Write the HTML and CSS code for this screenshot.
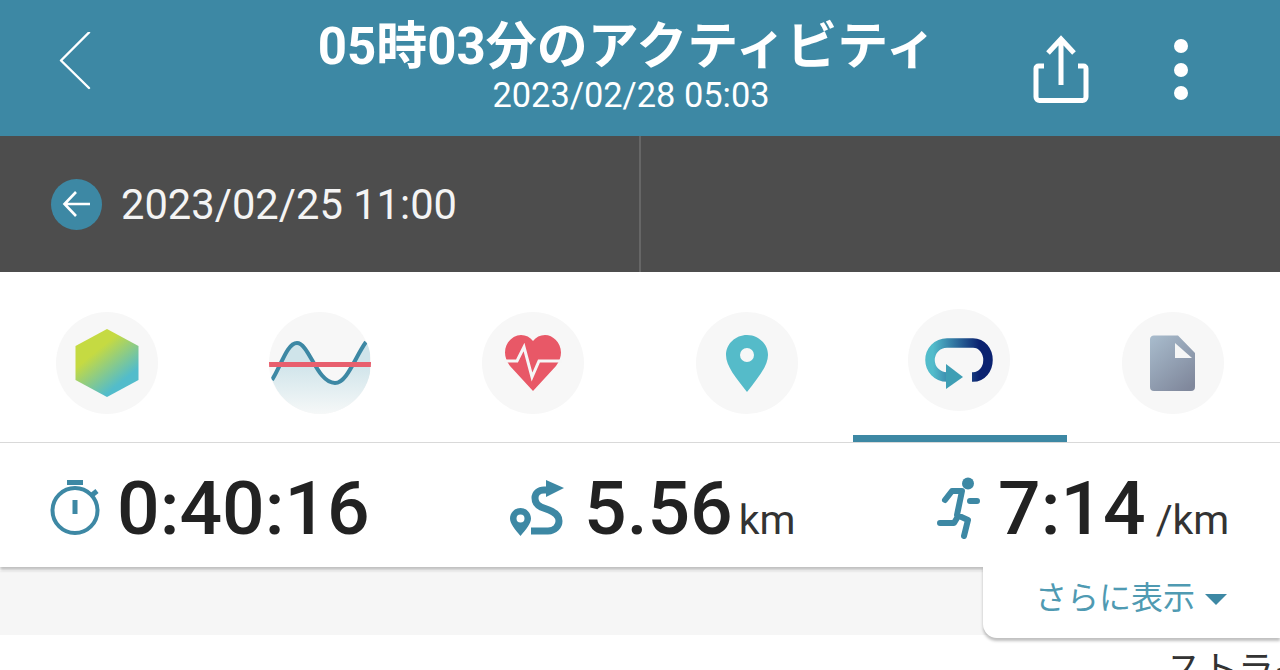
FILE: index.html
```html
<!DOCTYPE html>
<html lang="ja">
<head>
<meta charset="utf-8">
<title>05時03分のアクティビティ</title>
<link rel="stylesheet" href="styles.css">
</head>
<body>
<header class="top">
  <svg class="back" width="32" height="58" viewBox="0 0 32 58"><path d="M30 1.500 2 29.500 30 57" transform="translate(0 -1)" fill="none" stroke="#fff" stroke-width="2.400" stroke-linecap="round" stroke-linejoin="round" /></svg>
  <div class="heading">
    <div class="title">05時03分のアクティビティ</div>
    <div class="subtitle">2023/02/28 05:03</div>
  </div>
  <svg class="share" width="56" height="70" viewBox="0 0 56 70"><path d="M11 33H5.500a2.500 2.500 0 0 0-2.500 2.500V64a3.500 3.500 0 0 0 3.500 3.500h43A3.500 3.500 0 0 0 53 64V35.500A2.500 2.500 0 0 0 50.500 33H45M28 52V6M15 20 28 6l13 14" fill="none" stroke="#fff" stroke-width="5" /></svg>
  <div class="dots"><i></i><i></i><i></i></div>
</header>
<nav class="pager">
  <div class="pager-cell">
    <span class="prev"><svg width="32" height="32" viewBox="0 0 32 32"><path d="M29 16H4M15 4 3.500 16 15 28" fill="none" stroke="#fff" stroke-width="2.600" /></svg></span>
    <span class="prev-date">2023/02/25 11:00</span>
  </div>
  <div class="pager-cell"></div>
</nav>
<section class="tabs">
  <div class="tab"><span class="disc">
    <svg width="64" height="70" viewBox="0 0 64 70"><defs><linearGradient id="g1" x1="0.250" y1="0.200" x2="0.700" y2="0.800"><stop offset="0.200" stop-color="#c5da42"/><stop offset="1" stop-color="#52bccb"/></linearGradient></defs><path d="M32 1 63.500 18v34L32 69 .5 52V18z" fill="url(#g1)"/></svg>
  </span></div>
  <div class="tab"><span class="disc">
    <svg width="102" height="102" viewBox="0 0 102 102"><defs><linearGradient id="g2" x1="0" y1="0" x2="0" y2="1"><stop offset="0.300" stop-color="#cfe4ea"/><stop offset="1" stop-color="#f6f8f8"/></linearGradient></defs><path d="M3 68C12 54 18 31 28 31c12 0 20 40 38 40 12 0 22-28 35-42v34A51 51 0 0 1 8 78z" fill="url(#g2)"/><path d="M3 68C12 54 18 31 28 31c12 0 20 40 38 40 12 0 20-26 31-41" fill="none" stroke="#3d88a4" stroke-width="4"/><rect x="0" y="50" width="102" height="5" fill="#e85f6e"/></svg>
  </span></div>
  <div class="tab"><span class="disc">
    <svg width="58" height="58" viewBox="0 0 58 58"><path d="M29 57 6 32C-6 16 6 1 17 1c5 0 9 2 12 6 3-4 7-6 12-6 11 0 23 15 11 31z" fill="#e85867"/><path d="M0 27h13l7-14 8 30 7-16h23" fill="none" stroke="#f6f6f6" stroke-width="3"/></svg>
  </span></div>
  <div class="tab"><span class="disc">
    <svg width="42" height="57" viewBox="0 0 42 57"><path fill-rule="evenodd" d="M21 0c11.500 0 21 9 21 20 0 11-10 23-21 37C10 43 0 31 0 20 0 9 9.500 0 21 0zm0 13a7 7 0 1 0 0 14 7 7 0 0 0 0-14z" fill="#55bbc9"/></svg>
  </span></div>
  <div class="tab active"><span class="disc raised">
    <svg width="70" height="58" viewBox="0 0 70 58"><defs><linearGradient id="g3" x1="0" y1="0" x2="1" y2="0"><stop offset="0.050" stop-color="#52bccb"/><stop offset="0.850" stop-color="#0b2270"/></linearGradient></defs><path d="M48 46h1c9 0 15-8 15-17S58 12 49 12H23C13 12 6 20 6 29s7 17 17 17h3" fill="none" stroke="url(#g3)" stroke-width="9.500"/><path d="M22 33l17 13-17 12z" fill="#3e9eb4"/></svg>
  </span></div>
  <div class="tab"><span class="disc">
    <svg width="46" height="56" viewBox="0 0 46 56"><defs><linearGradient id="g4" x1="0.100" y1="0" x2="0.800" y2="1"><stop offset="0" stop-color="#a7bacb"/><stop offset="1" stop-color="#80889c"/></linearGradient></defs><path d="M4 .5h24L45 18v34a4 4 0 0 1-4 4H4a4 4 0 0 1-4-4V4a4 4 0 0 1 4-3.500z" fill="url(#g4)"/><path d="M25 8v15h17z" fill="#f6f6f6"/></svg>
  </span></div>
</section>
<section class="stats">
  <div class="stat s1">
    <svg width="50" height="56" viewBox="0 0 50 56"><path d="M17 2.500H33M25 20V34M42 15l5-4" fill="none" stroke="#3d88a4" stroke-width="5"/><circle cx="25" cy="30.500" r="22.500" fill="none" stroke="#3d88a4" stroke-width="4"/></svg>
    <span class="num">0:40:16</span>
  </div>
  <div class="stat s2">
    <svg width="54" height="56" viewBox="0 0 54 56"><path d="M21 51h17c7 0 11-5 11-10 0-6-5-9-10-11l-8-3c-4-2-6-5-6-9 0-5 4-8 9-8h6" fill="none" stroke="#3d88a4" stroke-width="7"/><path d="M36 0l18 8-18 9z" fill="#3d88a4"/><path fill-rule="evenodd" d="M10.500 28c6 0 10.500 5 10.500 10.500 0 5-5 11-10.500 17.500C5 49.500 0 43.500 0 38.500 0 33 4.500 28 10.500 28zm0 6.500a4 4 0 1 0 0 8 4 4 0 0 0 0-8z" fill="#3d88a4"/></svg>
    <span class="num">5.56</span><span class="unit">km</span>
  </div>
  <div class="stat s3">
    <svg width="44" height="62" viewBox="0 0 44 62"><circle cx="31" cy="6.500" r="6" fill="#3d88a4"/><path d="M8 23l7-9h10l-5 24 11 5-4 16M33 24h7M20 41l-3 5H3" fill="none" stroke="#3d88a4" stroke-width="6" stroke-linecap="round" stroke-linejoin="round"/></svg>
    <span class="num">7:14</span><span class="unit">/km</span>
  </div>
</section>
<div class="band"></div>
<button class="more">さらに表示<span class="caret"></span></button>
<div class="foot">ストライド</div>
</body>
</html>
```
FILE: styles.css
```css
* { box-sizing: border-box; }
html, body { margin: 0; height: 670px; overflow: hidden; }
body { position: relative; background: #fff; font-family: Roboto, "Noto Sans CJK JP", sans-serif; color: #222; }
.top { height: 136px; background: #3d88a4; display: flex; align-items: flex-start; color: #fff; position: relative; }
.back { margin: 32px 0 0 59px; flex: none; }
.heading { position: absolute; left: 0; right: 0; top: 20px; text-align: center; }
.title { font-size: 51px; font-weight: 700; line-height: 54px; padding-right: 26px; white-space: nowrap; }
.subtitle { font-size: 34.400px; line-height: 40px; margin-top: 1px; padding-right: 18px; }
.share { margin: 33px 0 0 942px; flex: none; }
.dots { margin: 39px 0 0 85px; display: flex; flex-direction: column; gap: 9.500px; }
.dots i { display: block; width: 14px; height: 14px; border-radius: 50%; background: #fff; }
.pager { height: 136px; background: #4d4d4d; display: flex; }
.pager-cell { flex: 1; display: flex; align-items: center; padding-left: 51px; gap: 19px; }
.pager-cell + .pager-cell { border-left: 2px solid #666; }
.prev { width: 51px; height: 51px; border-radius: 50%; background: #3d88a4; display: flex; align-items: center; justify-content: center; }
.prev-date { font-size: 41.700px; color: #f4f4f4; font-weight: 400; }
.tabs { height: 171px; display: flex; border-bottom: 1px solid #d9d9d9; }
.tab { flex: 1; display: flex; justify-content: center; padding-top: 40px; position: relative; }
.tab.active::after { content: ""; position: absolute; left: 0; right: 0; bottom: 0; height: 7px; background: #3d88a4; }
.disc { width: 102px; height: 102px; border-radius: 50%; background: #f7f7f7; display: flex; align-items: center; justify-content: center; overflow: hidden; }
.raised { margin: -3px 2px 0 0; }
.stats { height: 124px; display: flex; align-items: center; padding: 5px 0 0 50px; box-shadow: 0 3px 3px rgba(0,0,0,.25); position: relative; background: #fff; }
.stat { display: flex; align-items: baseline; flex: none; }
.stat svg { align-self: center; flex: none; }
.s1 { width: 460px; }
.s1 svg { margin-right: 17px; }
.s2 { width: 427px; }
.s2 svg { margin-right: 20px; }
.s3 svg { margin-right: 17px; }
.num { font-size: 75px; font-weight: 500; line-height: 76px; color: #222; }
.unit { font-size: 41px; margin-left: 10px; color: #333; }
.s2 .unit { margin-left: 6px; }
.band { height: 64px; margin-top: 4px; background: #f6f6f6; }
.more { position: absolute; left: 983px; top: 566px; width: 297px; height: 72px; border: 0; background: #fff; border-bottom-left-radius: 14px; box-shadow: 0 3px 3px rgba(0,0,0,.25); font: 400 32px "Noto Sans CJK JP", sans-serif; color: #4f9ab2; display: flex; align-items: center; padding: 0 0 15px 52px; }
.caret { width: 0; height: 0; border: 11px solid transparent; border-top: 11px solid #3d88a4; border-bottom: 0; margin: 9px 0 0 10px; }
.foot { position: absolute; left: 1166px; top: 640px; font: 400 36px "Noto Sans CJK JP", sans-serif; white-space: nowrap; color: #333; }
```
